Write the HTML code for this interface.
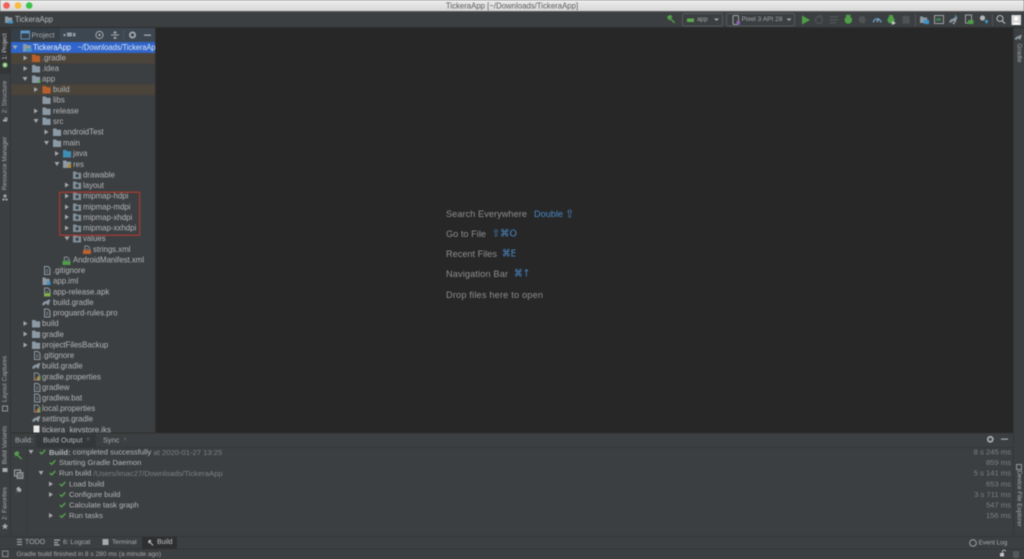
<!DOCTYPE html>
<html><head><meta charset="utf-8"><title>TickeraApp</title>
<style>
html,body{margin:0;padding:0;background:#3c3f41;width:1024px;height:559px;overflow:hidden}
svg{display:block;filter:blur(.42px)}
text{font-family:"Liberation Sans","DejaVu Sans",sans-serif;font-size:7.8px;fill:#b4b6b8;dominant-baseline:central}
.t text{font-size:7.85px}
.b text{font-size:7.65px}
.g{fill:#7d8083}
.c{font-size:9.2px;fill:#8f8f8f}
.s{font-size:6.3px;fill:#a8aaac}
</style></head><body>
<svg width="1024" height="559" viewBox="0 0 1024 559" xmlns="http://www.w3.org/2000/svg">
<defs>
<linearGradient id="tb" x1="0" y1="0" x2="0" y2="1"><stop offset="0" stop-color="#ececec"/><stop offset="1" stop-color="#d8d8d8"/></linearGradient>
<symbol id="f" viewBox="0 0 10 8" preserveAspectRatio="none" overflow="visible"><path d="M0 0.5h3.5l1 1.2H9V8H0z" fill="#8b9aa5"/></symbol>
<symbol id="fo" viewBox="0 0 10 8" preserveAspectRatio="none" overflow="visible"><path d="M0 0.5h3.5l1 1.2H9V8H0z" fill="#b8602c"/></symbol>
<symbol id="fb" viewBox="0 0 10 8" preserveAspectRatio="none" overflow="visible"><path d="M0 0.5h3.5l1 1.2H9V8H0z" fill="#3f8fb5"/></symbol>
<symbol id="fr" viewBox="0 0 10 8" preserveAspectRatio="none" overflow="visible"><path d="M0 0.5h3.5l1 1.2H9V8H0z" fill="#7f8f9a"/><rect x="3" y="3.2" width="3.2" height="3" fill="#3c3f41"/></symbol>
<symbol id="d" viewBox="0 0 8 9" overflow="visible"><path d="M1.5.5h3.5l2 2v6H1.5z" fill="none" stroke="#8d9aa3" stroke-width="1"/><path d="M3 4h2.5M3 6h2.5" stroke="#8d9aa3" stroke-width=".7"/></symbol>
<symbol id="gr" viewBox="0 0 10 8" overflow="visible"><path d="M0 7.5c.5-3 2.5-4.5 5-4.5 1-1.5 3-2 4.5-1.5L8.5 4 7.5 7.5H6L5.5 6H3.5L3 7.500z" fill="#8d9aa3"/></symbol>
<symbol id="pr" viewBox="0 0 9 9" overflow="visible"><path d="M1.5.5h3.5l2 2v6H1.5z" fill="none" stroke="#8d9aa3" stroke-width="1"/><rect x="3" y="6" width="1.4" height="3" fill="#c94f3d"/><rect x="5" y="4.500" width="1.400" height="4.500" fill="#d6a13a"/><rect x="7" y="3" width="1.400" height="6" fill="#5c9e4e"/></symbol>
<symbol id="ar" viewBox="0 0 6 6" overflow="visible"><path d="M1 .5L5 3 1 5.500z" fill="#a4a7a9"/></symbol>
<symbol id="dn" viewBox="0 0 6 6" overflow="visible"><path d="M.5 1L5.500 1 3 5z" fill="#a4a7a9"/></symbol>
<symbol id="ck" viewBox="0 0 8 7" overflow="visible"><path d="M.8 3.500L3 5.700 7.400 1" fill="none" stroke="#55a04c" stroke-width="1.700"/></symbol>
</defs>

<!-- base -->
<rect width="1024" height="559" fill="#3c3f41"/>
<rect width="1024" height="11" fill="url(#tb)"/>
<rect y="11" width="1024" height="1" fill="#5a5a5a"/>
<circle cx="6.500" cy="5.500" r="3.300" fill="#f2605a"/>
<circle cx="18" cy="5.500" r="3.300" fill="#f6bc3c"/>
<circle cx="29.200" cy="5.500" r="3.300" fill="#3cc24c"/>
<text x="512" y="5.800" text-anchor="middle" style="font-size:7.800px;fill:#5d5d5d">TickeraApp [~/Downloads/TickeraApp]</text>

<!-- nav / toolbar -->
<rect y="27" width="1024" height="1" fill="#2e2e2e"/>
<use href="#f" x="5" y="16" width="8" height="7"/>
<rect x="8" y="21" width="5" height="2.500" fill="#3e93c9"/>
<text x="15" y="19.500" style="font-size:8px;fill:#b9bbbd" textLength="38" lengthAdjust="spacingAndGlyphs">TickeraApp</text>

<path d="M667 16.500l3.500-1.800 2 2-1.500 1.500 4 4-1 1-4-4-1.300 1.300z" fill="#53a04b"/>
<rect x="682.500" y="13.500" width="40" height="12.500" rx="2" fill="none" stroke="#56595b"/>
<path d="M687 18.500h7v3.500h-7z" fill="#5dab4e"/>
<text x="697" y="19.700" style="font-size:6.400px;fill:#a5a7a9">app</text>
<path d="M714 18.500h5l-2.500 2.500z" fill="#a4a7a9"/>
<rect x="726.500" y="13.500" width="68" height="12.500" rx="2" fill="none" stroke="#56595b"/>
<rect x="733" y="15.500" width="5.500" height="9" rx="1" fill="none" stroke="#9aa0a4"/>
<rect x="736.500" y="21" width="3.500" height="3.500" fill="#8a63ad"/>
<text x="741.500" y="19.700" style="font-size:6.400px;fill:#a5a7a9" textLength="41" lengthAdjust="spacingAndGlyphs">Pixel 3 API 28</text>
<path d="M786.500 18.500h5l-2.500 2.500z" fill="#a4a7a9"/>

<path d="M802 15.500l8 4.500-8 4.500z" fill="#4f9e48"/>
<circle cx="819" cy="20" r="3.500" fill="none" stroke="#505355" stroke-width="1.300"/><path d="M819 15l3 0-1 3z" fill="#505355"/>
<rect x="830" y="16" width="8" height="1.500" fill="#505355"/><rect x="830" y="19" width="8" height="1.500" fill="#505355"/><rect x="830" y="22" width="6" height="1.500" fill="#505355"/>
<circle cx="848.300" cy="20" r="3.800" fill="#4f9e48"/><rect x="846" y="14.800" width="4.500" height="1.800" fill="#4f9e48"/>
<circle cx="862" cy="19.500" r="3.500" fill="#505355"/><path d="M863 19l3 2.500-3 2.500z" fill="#505355"/>
<path d="M873.500 22.500a3.700 3.700 0 0 1 7.400 0" fill="none" stroke="#5a93c0" stroke-width="1.600"/><path d="M877 22l1.500-3" stroke="#bbb" stroke-width="1"/>
<circle cx="891" cy="20" r="3.600" fill="#4f9e48"/><rect x="889" y="15" width="4" height="2" fill="#4f9e48"/><path d="M892 21l4 2-4 2z" fill="#cfcfcf"/>
<rect x="902.500" y="16" width="7" height="7.500" fill="#505355"/>
<rect x="915" y="14" width="1" height="12" fill="#505355"/>
<use href="#f" x="920" y="16" width="8" height="7"/><rect x="924" y="20" width="5" height="4" fill="#3e93c9"/>
<rect x="934.500" y="15.500" width="9" height="8" fill="none" stroke="#9aa0a4"/><rect x="936" y="18" width="5" height="3" fill="#3f7a4c"/>
<use href="#gr" x="949" y="16" width="9" height="7"/><path d="M955 14.500l2 2-2 1z" fill="#3e93c9"/><path d="M953 22l2 2h-2z" fill="#cfcfcf"/>
<rect x="965.500" y="15" width="6" height="8" fill="none" stroke="#9aa0a4"/><rect x="968" y="20" width="5.500" height="4" fill="#4f9e48"/>
<circle cx="982.500" cy="18" r="2.600" fill="#b4b6b8"/><path d="M985 20h3v2l-1.500 2-1.500-2z" fill="#3e93c9"/>
<rect x="992" y="14" width="1" height="12" fill="#505355"/>
<circle cx="1000" cy="18.500" r="3" fill="none" stroke="#b4b6b8" stroke-width="1.100"/><path d="M1002.200 20.800l2.800 2.800" stroke="#b4b6b8" stroke-width="1.200"/>
<rect x="1011.500" y="15" width="9.500" height="10" fill="#d8d8d8"/><circle cx="1016.200" cy="18.500" r="2" fill="#fff"/><path d="M1012 25a4.500 3.500 0 0 1 8.500 0z" fill="#fff"/>

<!-- editor -->
<rect x="156" y="28" width="857" height="405" fill="#272727"/>
<rect x="155" y="28" width="1" height="405" fill="#2f2f2f"/>
<rect x="10" y="28" width="1" height="508" fill="#333537"/>
<rect x="1013" y="28" width="1" height="508" fill="#333537"/>

<!-- project header -->
<rect x="11" y="28" width="144" height="14" fill="#3d4751"/>
<rect x="11" y="28" width="49" height="14" fill="#363e46"/>
<rect x="0" y="28" width="10" height="46" fill="#333537"/>
<rect x="21" y="31" width="8.500" height="8" fill="none" stroke="#5b93c0" stroke-width="1"/><rect x="21.500" y="31.500" width="7.500" height="2" fill="#5b93c0"/>
<text x="31.500" y="35" style="font-size:7.400px;fill:#a9acae">Project</text>
<path d="M63.500 34h2v2h-2z" fill="#a4a7a9"/><rect x="67" y="32.500" width="5" height="4" fill="#8b9aa5"/><rect x="73" y="33" width="2.500" height="3.500" fill="#8b9aa5"/>
<circle cx="99.500" cy="35" r="3.600" fill="none" stroke="#a8abad" stroke-width="1"/><circle cx="99.500" cy="35" r="1.200" fill="#a8abad"/>
<path d="M111 35h8M115 31l0 2.500M115 39l0-2.500M113.500 32l1.500 1.500 1.500-1.500M113.500 38.500l1.500-1.500 1.500 1.500" stroke="#a8abad" stroke-width=".9" fill="none"/>
<rect x="123" y="30" width="1" height="10" fill="#4d5256"/>
<circle cx="132.500" cy="35" r="2.600" fill="none" stroke="#a8abad" stroke-width="1.800"/>
<rect x="144" y="34.500" width="7" height="1.300" fill="#a8abad"/>

<!-- selection and highlights -->
<rect x="11" y="42" width="144" height="11" fill="#2f65ca"/>
<rect x="11" y="53" width="144" height="10.500" fill="#4a443b"/>
<rect x="11" y="84.500" width="144" height="10.500" fill="#4a443b"/>

<!-- tree -->
<use href="#dn" x="12" y="44.500" width="6" height="6"/>
<use href="#f" x="23" y="43.500" width="9" height="8"/><rect x="26" y="48.500" width="6" height="2.500" fill="#3e93c9"/>
<text x="33" y="47.500" style="fill:#eef1f5;font-size:8px" textLength="38" lengthAdjust="spacingAndGlyphs">TickeraApp</text>
<text x="77.500" y="47.500" style="fill:#dfe5ee;font-size:8px" textLength="78" lengthAdjust="spacingAndGlyphs">~/Downloads/TickeraAp</text>

<g class="t">
<use href="#ar" x="22.500" y="55" width="6" height="6"/><use href="#fo" x="32" y="54" width="9" height="8"/><text x="42" y="58">.gradle</text>
<use href="#ar" x="22.500" y="65.500" width="6" height="6"/><use href="#f" x="32" y="64.500" width="9" height="8"/><text x="42" y="68.500">.idea</text>
<use href="#dn" x="22" y="76" width="6" height="6"/><use href="#f" x="32" y="75" width="9" height="8"/><rect x="38" y="80.500" width="2.500" height="2.500" fill="#5dab4e"/><text x="42" y="79">app</text>
<use href="#ar" x="33" y="86.500" width="6" height="6"/><use href="#fo" x="42.500" y="85.500" width="9" height="8"/><text x="53" y="89.500">build</text>
<use href="#f" x="42.500" y="96" width="9" height="8"/><text x="53" y="100">libs</text>
<use href="#ar" x="33" y="108" width="6" height="6"/><use href="#f" x="42.500" y="107" width="9" height="8"/><text x="53" y="111">release</text>
<use href="#dn" x="33" y="118" width="6" height="6"/><use href="#f" x="42.500" y="117" width="9" height="8"/><text x="53" y="121.500">src</text>
<use href="#ar" x="43.500" y="129" width="6" height="6"/><use href="#f" x="53" y="128" width="9" height="8"/><text x="63" y="132">androidTest</text>
<use href="#dn" x="43.500" y="140" width="6" height="6"/><use href="#f" x="53" y="139" width="9" height="8"/><text x="63" y="143">main</text>
<use href="#ar" x="54" y="150.500" width="6" height="6"/><use href="#fb" x="63" y="149.500" width="9" height="8"/><text x="73" y="153.500">java</text>
<use href="#dn" x="54" y="161" width="6" height="6"/><use href="#f" x="63" y="160" width="9" height="8"/><rect x="68" y="164" width="3" height="4" fill="#b8892f"/><text x="73" y="164.500">res</text>
<use href="#fr" x="73" y="171" width="9" height="8"/><text x="83" y="175">drawable</text>
<use href="#ar" x="64" y="182" width="6" height="6"/><use href="#fr" x="73" y="181" width="9" height="8"/><text x="83" y="185.500">layout</text>
<use href="#ar" x="64" y="193" width="6" height="6"/><use href="#fr" x="73" y="192" width="9" height="8"/><text x="83" y="196">mipmap-hdpi</text>
<use href="#ar" x="64" y="204" width="6" height="6"/><use href="#fr" x="73" y="203" width="9" height="8"/><text x="83" y="207">mipmap-mdpi</text>
<use href="#ar" x="64" y="214" width="6" height="6"/><use href="#fr" x="73" y="213" width="9" height="8"/><text x="83" y="217.500">mipmap-xhdpi</text>
<use href="#ar" x="64" y="225" width="6" height="6"/><use href="#fr" x="73" y="224" width="9" height="8"/><text x="83" y="228">mipmap-xxhdpi</text>
<use href="#dn" x="64" y="235.500" width="6" height="6"/><use href="#fr" x="73" y="234.500" width="9" height="8"/><text x="83" y="238.500">values</text>
<use href="#d" x="83.500" y="245" width="7" height="9"/><rect x="83" y="250" width="8" height="4" fill="#c0622b"/><text x="93" y="249.500">strings.xml</text>
<use href="#d" x="63" y="256" width="7" height="9"/><rect x="62.500" y="261" width="8" height="4" fill="#4f9e48"/><text x="73" y="260">AndroidManifest.xml</text>
<use href="#d" x="43" y="266" width="8" height="9"/><text x="53" y="270.500">.gitignore</text>
<use href="#f" x="42.500" y="277" width="8" height="8"/><rect x="47" y="281.500" width="3.500" height="3.500" fill="#3e93c9"/><text x="53" y="281">app.iml</text>
<use href="#d" x="43" y="287.500" width="8" height="9"/><rect x="44.500" y="293" width="6" height="3.500" fill="#7fae46"/><text x="53" y="292">app-release.apk</text>
<use href="#gr" x="42" y="298.500" width="9" height="7"/><text x="53" y="302.500">build.gradle</text>
<use href="#d" x="43" y="308.500" width="8" height="9"/><text x="53" y="313">proguard-rules.pro</text>
<use href="#ar" x="22.500" y="320.500" width="6" height="6"/><use href="#f" x="32" y="319.500" width="9" height="8"/><text x="42" y="323.500">build</text>
<use href="#ar" x="22.500" y="331" width="6" height="6"/><use href="#f" x="32" y="330" width="9" height="8"/><text x="42" y="334.500">gradle</text>
<use href="#ar" x="22.500" y="342" width="6" height="6"/><use href="#f" x="32" y="341" width="9" height="8"/><text x="42" y="345">projectFilesBackup</text>
<use href="#d" x="33" y="351" width="8" height="9"/><text x="42" y="355.500">.gitignore</text>
<use href="#gr" x="32" y="362" width="9" height="7"/><text x="42" y="366">build.gradle</text>
<use href="#pr" x="33" y="372" width="8" height="9"/><text x="42" y="377">gradle.properties</text>
<use href="#d" x="33" y="383" width="8" height="9"/><text x="42" y="387.500">gradlew</text>
<use href="#d" x="33" y="393.500" width="8" height="9"/><text x="42" y="398">gradlew.bat</text>
<use href="#pr" x="33" y="404" width="8" height="9"/><text x="42" y="408.500">local.properties</text>
<use href="#gr" x="32" y="415" width="9" height="7"/><text x="42" y="419">settings.gradle</text>
<rect x="33.500" y="425.500" width="6" height="8" fill="#e8e8e8"/><text x="42" y="430">tickera_keystore.jks</text>
</g>

<!-- red box -->
<rect x="59.700" y="192.200" width="80" height="43" fill="none" stroke="#c0392f" stroke-width="1"/>

<!-- welcome -->
<text class="c" x="446" y="214" textLength="81">Search Everywhere</text>
<text class="c" x="534" y="214" style="fill:#4a88c7" textLength="29">Double</text>
<text class="c" x="565" y="214" style="fill:#4a88c7;font-family:'DejaVu Sans';font-size:11px">⇧</text>
<text class="c" x="446" y="234" textLength="40">Go to File</text>
<text class="c" x="492" y="234" style="fill:#4a88c7;font-family:'DejaVu Sans';font-size:10px" textLength="25" lengthAdjust="spacingAndGlyphs">⇧⌘O</text>
<text class="c" x="446" y="254" textLength="51">Recent Files</text>
<text class="c" x="502" y="254" style="fill:#4a88c7;font-family:'DejaVu Sans';font-size:10px" textLength="14" lengthAdjust="spacingAndGlyphs">⌘E</text>
<text class="c" x="446" y="274" textLength="62">Navigation Bar</text>
<text class="c" x="514" y="274" style="fill:#4a88c7;font-family:'DejaVu Sans';font-size:10px" textLength="16" lengthAdjust="spacingAndGlyphs">⌘↑</text>
<text class="c" x="446" y="295" textLength="97">Drop files here to open</text>

<!-- bottom panel -->
<rect x="11" y="433" width="1002" height="103" fill="#3c3f41"/>
<rect x="11" y="432.500" width="1002" height="1" fill="#2f2f2f"/>
<rect x="11" y="447" width="1002" height="1" fill="#35373a"/>
<rect x="36" y="434" width="60" height="13" fill="#34373a"/>
<text x="15" y="440" style="font-size:7.200px;fill:#a9abad">Build:</text>
<text x="43" y="440" style="font-size:7.200px;fill:#b4b6b8">Build Output</text>
<text x="86" y="440" style="font-size:7px;fill:#66696b">×</text>
<text x="103" y="440" style="font-size:7.400px;fill:#a9abad">Sync</text>
<text x="123" y="440" style="font-size:7px;fill:#66696b">×</text>
<circle cx="990.300" cy="439.300" r="2.500" fill="none" stroke="#a8abad" stroke-width="1.800"/>
<rect x="1001" y="438.500" width="7" height="1.200" fill="#a8abad"/>
<rect x="26.500" y="448" width="1" height="88" fill="#35373a"/>
<path d="M14 453l3.500-2 2 2-1.500 1.500 4 4-1 1-4-4-1.300 1.300z" fill="#53a04b"/>
<rect x="14.500" y="470" width="6" height="6" fill="none" stroke="#a8abad"/><rect x="17" y="472.500" width="6" height="6" fill="#6c7073" stroke="#a8abad" stroke-width=".8"/>
<path d="M21.500 489.500l-3-3-1.500 1.500-1 1 1.500 1.500-2.500 3 3-2.500 1.500 1.500 2-2z" fill="#a8abad"/>

<g class="b">
<use href="#dn" x="28" y="449" width="6" height="6"/>
<use href="#ck" x="39" y="449" width="7" height="6"/>
<text x="49" y="452"><tspan style="font-weight:bold">Build:</tspan> completed successfully <tspan style="fill:#7d8083"> at 2020-01-27 13:25</tspan></text>
<use href="#ck" x="49" y="459.500" width="7" height="6"/><text x="59" y="462.500">Starting Gradle Daemon</text>
<use href="#dn" x="38" y="470" width="6" height="6"/><use href="#ck" x="49" y="470" width="7" height="6"/><text x="59" y="473">Run build <tspan style="fill:#7d8083">/Users/imac27/Downloads/TickeraApp</tspan></text>
<use href="#ar" x="48" y="481" width="6" height="6"/><use href="#ck" x="59" y="481" width="7" height="6"/><text x="69" y="484">Load build</text>
<use href="#ar" x="48" y="491.500" width="6" height="6"/><use href="#ck" x="59" y="491.500" width="7" height="6"/><text x="69" y="494.500">Configure build</text>
<use href="#ck" x="59" y="502" width="7" height="6"/><text x="69" y="505">Calculate task graph</text>
<use href="#ar" x="48" y="512.500" width="6" height="6"/><use href="#ck" x="59" y="512.500" width="7" height="6"/><text x="69" y="515.500">Run tasks</text>

<g style="text-anchor:end">
<text x="1011" y="452" style="fill:#7d8083">8 s 245 ms</text>
<text x="1011" y="462.500" style="fill:#7d8083">859 ms</text>
<text x="1011" y="473" style="fill:#7d8083">5 s 141 ms</text>
<text x="1011" y="484" style="fill:#7d8083">653 ms</text>
<text x="1011" y="494.500" style="fill:#7d8083">3 s 711 ms</text>
<text x="1011" y="505" style="fill:#7d8083">547 ms</text>
<text x="1011" y="515.500" style="fill:#7d8083">156 ms</text>
</g>
</g>

<!-- side strips -->
<g>
<text class="s" transform="translate(5,46.500) rotate(-90)" text-anchor="middle" style="fill:#c8cacc">1: Project</text>
<circle cx="5" cy="65" r="2.800" fill="#5dab4e"/><rect x="3.800" y="63.500" width="2.400" height="3" fill="#d6d6d6"/>
<text class="s" transform="translate(5,97) rotate(-90)" text-anchor="middle">2: Structure</text>
<path d="M3 120h2M5 118h2v2H5zM3 121h4" stroke="#a8aaac" fill="none" stroke-width=".9"/>
<text class="s" transform="translate(5,163.500) rotate(-90)" text-anchor="middle">Resource Manager</text>
<path d="M5 194l2 2-2 2-2-2zM2.500 198.500h2v2h-2zM5.500 198.500h2v2h-2z" fill="#a8aaac"/>
<text class="s" transform="translate(5,379) rotate(-90)" text-anchor="middle">Layout Captures</text>
<rect x="2.500" y="406" width="5" height="5" fill="none" stroke="#a8aaac" stroke-width=".8"/>
<text class="s" transform="translate(5,445) rotate(-90)" text-anchor="middle">Build Variants</text>
<rect x="2.500" y="468" width="5" height="4" fill="#a8aaac"/>
<text class="s" transform="translate(5,503.500) rotate(-90)" text-anchor="middle">2: Favorites</text>
<path d="M5 523l1 2.200 2.300.2-1.800 1.500.6 2.300-2.100-1.300-2.100 1.300.6-2.300-1.800-1.500 2.300-.2z" fill="#a8aaac"/>
<use href="#gr" x="1014.500" y="34" width="8" height="6"/>
<text class="s" transform="translate(1019,53) rotate(90)" text-anchor="middle">Gradle</text>
<rect x="1016.500" y="464.500" width="5" height="5" fill="none" stroke="#a8aaac" stroke-width=".8"/>
<text class="s" transform="translate(1019,498.500) rotate(90)" text-anchor="middle">Device File Explorer</text>
</g>

<!-- bottom tool tabs -->
<rect x="0" y="536" width="1024" height="1" fill="#333537"/>
<rect x="142" y="537" width="35" height="11.500" fill="#2d2f31"/>
<path d="M17 539.500h5M17 542h5M17 544.500h5" stroke="#a8aaac" stroke-width="1"/>
<text x="25" y="542.500" style="font-size:7px;fill:#a9abad">TODO</text>
<rect x="54" y="539.500" width="6" height="1.200" fill="#a8aaac"/><rect x="54" y="542" width="4" height="1.200" fill="#a8aaac"/><rect x="54" y="544.300" width="5.500" height="1.200" fill="#a8aaac"/>
<text x="63" y="542.500" style="font-size:6.700px;fill:#a9abad">6: Logcat</text>
<rect x="102.500" y="539" width="6" height="6" fill="#a8aaac"/>
<text x="112" y="542.500" style="font-size:6.500px;fill:#a9abad">Terminal</text>
<path d="M148 541l2-1.500 1.500 1.500-1 1 3 3-.8.8-3-3-1 1z" fill="#b4b6b8"/>
<text x="157" y="542.500" style="font-size:7px;fill:#c3c5c7">Build</text>
<circle cx="973" cy="543" r="3.300" fill="none" stroke="#a8aaac" stroke-width=".9"/>
<text x="978.500" y="542.800" style="font-size:6.400px;fill:#a9abad">Event Log</text>

<!-- status bar -->
<rect x="0" y="549" width="1024" height="10" fill="#3c3f41"/>
<rect x="0" y="548.500" width="1024" height="1" fill="#323436"/>
<rect x="2.500" y="551" width="5.500" height="5.500" fill="none" stroke="#8f9295" stroke-width=".9"/>
<text x="16.500" y="554.500" style="font-size:6.700px;fill:#a6a8aa" textLength="144.500" lengthAdjust="spacingAndGlyphs">Gradle build finished in 8 s 280 ms (a minute ago)</text>
<rect x="1000" y="553" width="4" height="3.500" fill="#c4c6c8"/><path d="M1002.500 553v-1.500a1.500 1.500 0 0 1 3 0" fill="none" stroke="#c4c6c8" stroke-width=".8"/>
<rect x="1013" y="551" width="6" height="7" rx="2" fill="#55585a"/>
</svg>
</body></html>
